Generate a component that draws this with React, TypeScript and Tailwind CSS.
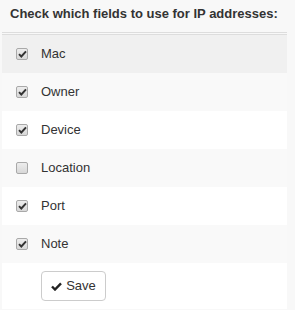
import { useState } from 'react'

const FIELDS = [
  { name: 'Mac', checked: true },
  { name: 'Owner', checked: true },
  { name: 'Device', checked: true },
  { name: 'Location', checked: false },
  { name: 'Port', checked: true },
  { name: 'Note', checked: true },
]

const rowBg = ['bg-[#f0f0f0]', 'bg-[#f9f9f9]', 'bg-white', 'bg-[#f9f9f9]', 'bg-white', 'bg-[#f9f9f9]']

function Box({ checked, onClick }: { checked: boolean; onClick: () => void }) {
  return (
    <button
      type="button"
      onClick={onClick}
      className="flex h-[12px] w-[12px] items-center justify-center rounded-[2px] border border-[#a9a9a9] bg-gradient-to-b from-[#ededed] to-[#d8d8d8]"
    >
      {checked && (
        <svg width="9" height="8" viewBox="0 0 9 8" fill="none">
          <path d="M1 4.2l2.3 2.3L8 1.3" stroke="#333" strokeWidth="1.9" />
        </svg>
      )}
    </button>
  )
}

export default function App() {
  const [fields, setFields] = useState(FIELDS)

  const toggle = (i: number) =>
    setFields(f => f.map((x, j) => (j === i ? { ...x, checked: !x.checked } : x)))

  return (
    <div className="h-[310px] w-[295px] overflow-hidden bg-[#f8f8f8] font-['Liberation_Sans',Arial,sans-serif] text-[13px] text-[#333]">
      <p className="whitespace-nowrap px-[10px] pt-[5px] pb-[9px] text-[13px] leading-[18px] font-bold">
        Check which fields to use for IP addresses:
      </p>

      <div className="ml-[2px] w-[285px] border-t border-[#ddd]">
        <div className="mt-[1px] border-t border-[#ddd]">
          {fields.map((f, i) => (
            <div key={f.name} className={`flex h-[38px] items-center ${rowBg[i]}`}>
              <div className="flex w-[39px] justify-center pl-[1px]">
                <Box checked={f.checked} onClick={() => toggle(i)} />
              </div>
              <span className="leading-[18px]">{f.name}</span>
            </div>
          ))}

          <div className="flex h-[46px] items-center bg-white pl-[39px]">
            <button
              type="button"
              className="flex h-[30px] w-[65px] items-center justify-center gap-[4px] rounded-[4px] border border-[#ccc] bg-white text-[13px] text-[#333]"
            >
              <svg width="11" height="9" viewBox="0 0 11 9" fill="none">
                <path d="M1 4.5l3 3L10 1.3" stroke="#222" strokeWidth="2.4" />
              </svg>
              Save
            </button>
          </div>
        </div>
      </div>
    </div>
  )
}
